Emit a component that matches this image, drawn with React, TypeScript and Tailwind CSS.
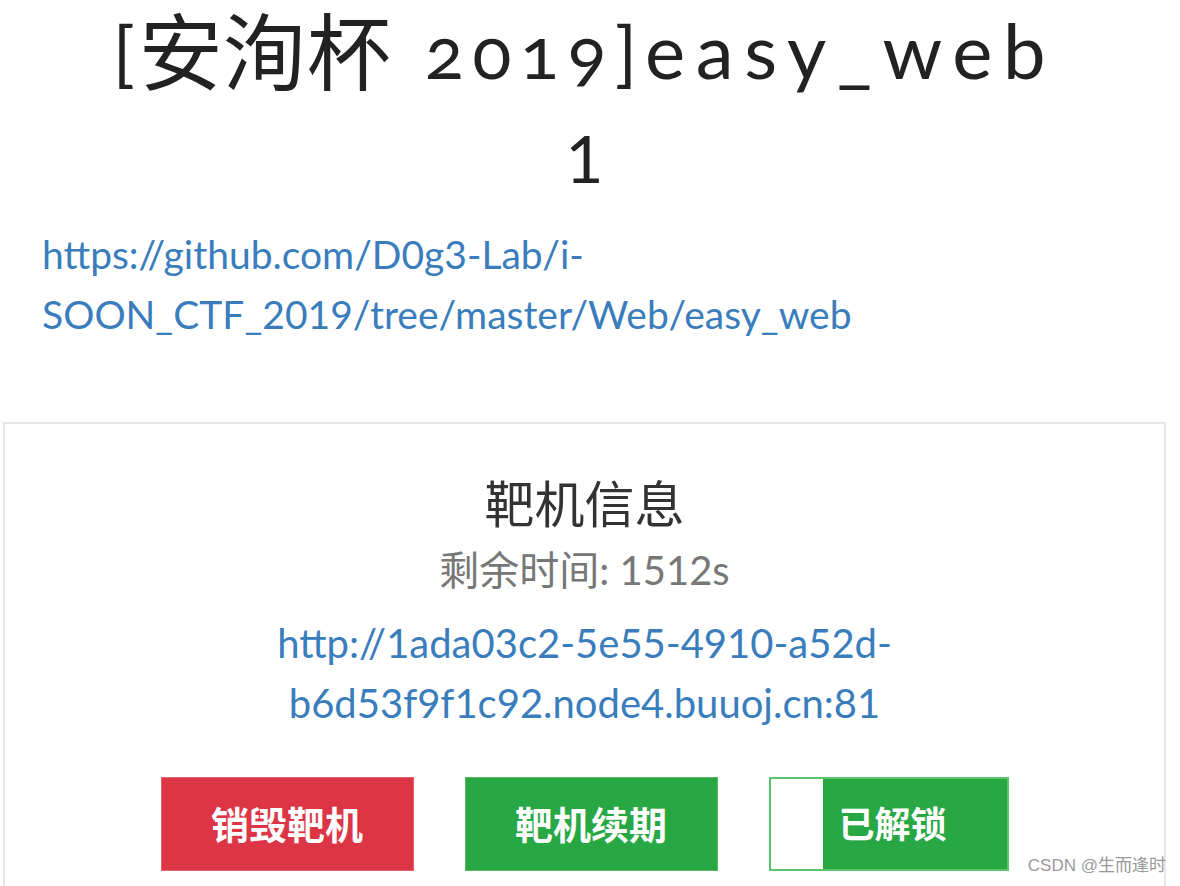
import React from "react"

const FONT = { fontFamily: "Lato, 'Noto Sans CJK SC', sans-serif" }

export default function App() {
  return (
    <div className="min-h-screen w-[1180px] overflow-hidden bg-white" style={FONT}>
      <div className="w-[1166px] pl-[3px]">
        <h1 className="pt-[4px] text-center text-[72px] font-normal text-[#222]">
          <div className="leading-[94px]">
            <span className="leading-none">[</span>
            <span className="ml-[4px] align-[-5px] text-[84px] leading-none">安洵杯</span>
            <span className="ml-[34px] leading-none tracking-[0.12em] oldstyle-nums">2019</span>
            <span className="leading-none">]</span>
            <span className="ml-[8px] text-[76px] leading-none tracking-[0.14em]">easy_web</span>
          </div>
          <div className="text-[66px] leading-[120px]">1</div>
        </h1>

        <div className="mt-[6px] pl-[39px] text-[39px] leading-[60px] text-[#3a7dbd]">
          <a href="#">
            https://github.com/D0g3-Lab/i-
            <br />
            SOON_CTF_2019/tree/master/Web/easy_web
          </a>
        </div>

        <div className="mt-[78px] border-2 border-[#e6e6e6] px-4 pb-6 pt-[50px] text-center">
          <h3 className="text-[50px] leading-[60px] text-[#333]">靶机信息</h3>
          <p className="mt-[11px] text-[40px] leading-[50px] text-[#777]">剩余时间: 1512s</p>
          <p className="mt-[18px] text-[40px] leading-[60px] text-[#3a7dbd]">
            <a href="#">
              http://1ada03c2-5e55-4910-a52d-
              <br />
              b6d53f9f1c92.node4.buuoj.cn:81
            </a>
          </p>

          <div className="mt-[44px] flex justify-center gap-[51px]">
            <button className="flex h-[94px] w-[253px] items-center justify-center border border-[#e4606d] bg-[#dc3545] text-[38px] font-bold text-white">
              销毁靶机
            </button>
            <button className="flex h-[94px] w-[253px] items-center justify-center border border-[#5cb85c] bg-[#28a745] text-[38px] font-bold text-white">
              靶机续期
            </button>
            <button className="flex h-[94px] w-[240px] items-stretch border-2 border-[#5cc36f] bg-[#28a745] text-[36px] font-bold text-white">
              <span className="w-[52px] bg-white" />
              <span className="ml-[16px] flex items-center">已解锁</span>
            </button>
          </div>
        </div>
      </div>

      <div
        className="absolute bottom-[8px] right-[14px] text-[17px] text-[#999]"
        style={{ fontFamily: "'Liberation Sans', 'Noto Sans CJK SC', sans-serif" }}
      >
        CSDN @生而逢时
      </div>
    </div>
  )
}
